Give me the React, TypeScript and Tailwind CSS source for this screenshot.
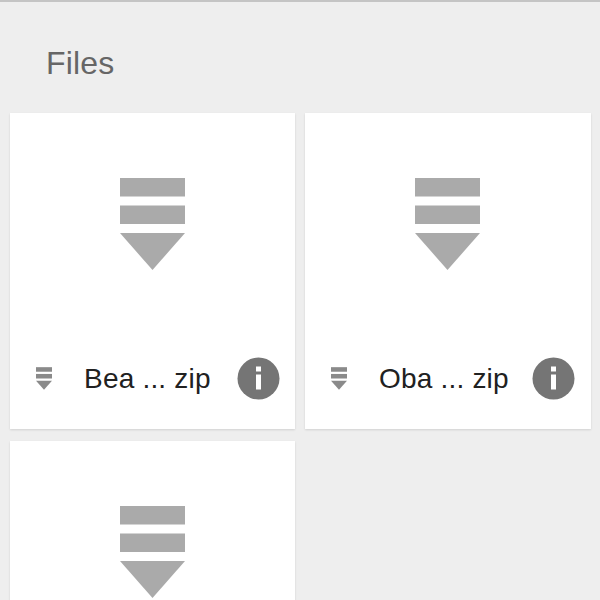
const files = ['Bea ... zip', 'Oba ... zip', ''];

function ZipIcon({ className, fill }: { className: string; fill: string }) {
  return (
    <svg viewBox="0 0 65 92" className={className} fill={fill}>
      <rect x="0" y="0" width="65" height="18.5" />
      <rect x="0" y="27.5" width="65" height="18.5" />
      <polygon points="0,55 65,55 32.5,92" />
    </svg>
  );
}

function InfoIcon() {
  return (
    <svg viewBox="0 0 43 43" className="h-[43px] w-[43px] shrink-0">
      <circle cx="21.5" cy="21.5" r="21" fill="#757575" />
      <rect x="19" y="9.5" width="5" height="5" fill="#ffffff" />
      <rect x="19" y="17.5" width="5" height="15" fill="#ffffff" />
    </svg>
  );
}

function FileCard({ name }: { name: string }) {
  return (
    <div className="h-[316px] bg-white shadow-[0_1px_2px_rgba(0,0,0,0.12)]">
      <div className="flex w-[285px] flex-col">
        <div className="flex justify-center pt-[65px]">
          <ZipIcon className="h-[92px] w-[65px]" fill="#aaaaaa" />
        </div>
        {name && (
          <div className="mt-[87px] flex items-center pl-[26px] pr-[15px]">
            <ZipIcon className="mb-[1px] h-[23px] w-[16px] shrink-0" fill="#8a8a8a" />
            <span className="ml-[32px] flex-1 truncate text-[28px] leading-[43px] tracking-[0.2px] text-[#212121]">
              {name}
            </span>
            <InfoIcon />
          </div>
        )}
      </div>
    </div>
  );
}

export default function App() {
  return (
    <div className="h-[600px] w-[600px] overflow-hidden border-t-2 border-[#c4c4c4] bg-[#eeeeee] font-['Liberation_Sans',sans-serif]">
      <h1 className="pb-[31px] pl-[46px] pt-[42px] text-[32px] font-normal leading-[38px] tracking-[0.2px] text-[#666666]">
        Files
      </h1>
      <div className="grid grid-cols-[285px_286px] gap-x-[10px] gap-y-[12px] pl-[10px]">
        {files.map((name, i) => (
          <FileCard key={i} name={name} />
        ))}
      </div>
    </div>
  );
}
